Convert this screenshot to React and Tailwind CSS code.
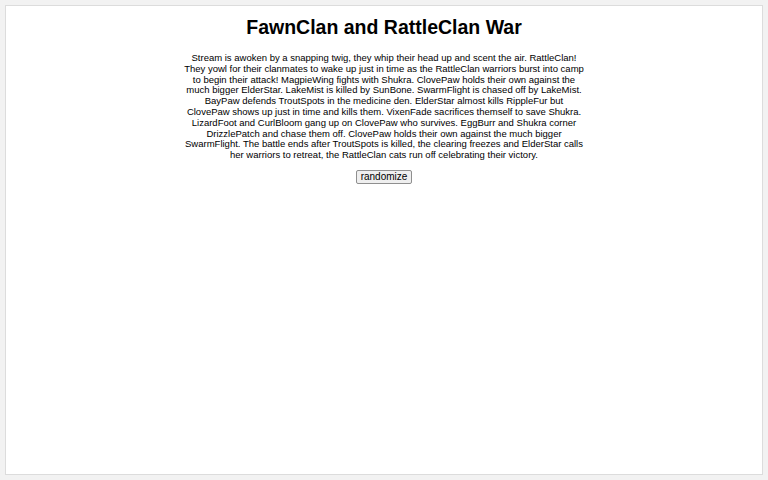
import React, { useState } from 'react';

const story =
  'Stream is awoken by a snapping twig, they whip their head up and scent the air. RattleClan! They yowl for their clanmates to wake up just in time as the RattleClan warriors burst into camp to begin their attack! MagpieWing fights with Shukra. ClovePaw holds their own against the much bigger ElderStar. LakeMist is killed by SunBone. SwarmFlight is chased off by LakeMist. BayPaw defends TroutSpots in the medicine den. ElderStar almost kills RippleFur but ClovePaw shows up just in time and kills them. VixenFade sacrifices themself to save Shukra. LizardFoot and CurlBloom gang up on ClovePaw who survives. EggBurr and Shukra corner DrizzlePatch and chase them off. ClovePaw holds their own against the much bigger SwarmFlight. The battle ends after TroutSpots is killed, the clearing freezes and ElderStar calls her warriors to retreat, the RattleClan cats run off celebrating their victory.';

export default function App() {
  const [text] = useState(story);

  return (
    <div className="h-[480px] w-[768px] bg-[#f2f2f2] p-[5px] font-['Liberation_Sans',Arial,sans-serif] text-black">
      <div className="flex h-full flex-col items-center border border-[#dcdcdc] bg-white">
        <h1 className="mt-[7px] text-[19.5px] font-bold leading-[28px]">FawnClan and RattleClan War</h1>

        <p className="mt-[12px] w-[403px] text-center text-[9.5px] leading-[10.8px]">{text}</p>

        <button className="mt-[9px] rounded-[2px] border border-[#8f8f8f] bg-[#efefef] px-[4px] text-[10px] leading-[12px]">
          randomize
        </button>
      </div>
    </div>
  );
}
